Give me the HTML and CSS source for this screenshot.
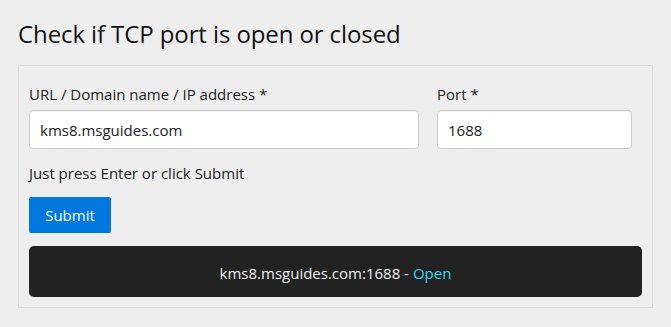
FILE: index.html
```html
<!DOCTYPE html>
<html>
<head>
  <title>TCP Port Checker</title>
  <link rel="stylesheet" href="styles.css">
</head>
<body>
  <div class="page">
    <h1 class="title">Check if TCP port is open or closed</h1>

    <form class="panel">
      <div class="fields">
        <div class="field">
          <label class="label" for="host">URL / Domain name / IP address *</label>
          <input class="input" id="host" type="text" value="kms8.msguides.com">
        </div>
        <div class="field">
          <label class="label" for="port">Port *</label>
          <input class="input" id="port" type="text" value="1688">
        </div>
      </div>

      <p class="hint">Just press Enter or click Submit</p>

      <div class="actions">
        <button class="btn" type="button">Submit</button>
      </div>

      <div class="result">
        kms8.msguides.com:1688 - <span class="result-open">Open</span>
      </div>
    </form>
  </div>
</body>
</html>
```

FILE: styles.css
```css
body {
  margin: 0;
  background: #eeeeee;
  font-family: "Open Sans", "Noto Sans", sans-serif;
  color: #222;
}

.page {
  padding: 0 18px;
}

.title {
  margin: 0;
  padding-top: 18px;
  height: 47px;
  font-size: 24px;
  font-weight: normal;
  line-height: 32px;
  color: #111;
  letter-spacing: -0.1px;
}

.panel {
  border: 1px solid #dddddd;
  padding: 18px 10px 10px;
  margin: 0;
}

.fields {
  display: grid;
  grid-template-columns: 390px 195px;
  column-gap: 18px;
}

.field {
  display: flex;
  flex-direction: column;
}

.label {
  font-size: 15px;
  line-height: 20px;
  margin-bottom: 6px;
  color: #222;
}

.input {
  box-sizing: border-box;
  height: 39px;
  padding: 0 10px;
  border: 1px solid #cccccc;
  border-radius: 4px;
  background: #fff;
  font-family: inherit;
  font-size: 15px;
  color: #222;
  box-shadow: inset 0 1px 1px rgba(0, 0, 0, 0.04);
}

.hint {
  margin: 14px 0 0;
  font-size: 15px;
  line-height: 20px;
}

.actions {
  margin-top: 14px;
}

.btn {
  width: 82px;
  height: 36px;
  border: none;
  border-radius: 2px;
  background: #0078de;
  color: #fff;
  font-family: inherit;
  font-size: 15px;
  padding: 0;
}

.result {
  margin-top: 13px;
  height: 51px;
  border-radius: 5px;
  background: #222222;
  color: #eeeeee;
  font-size: 15px;
  display: flex;
  align-items: center;
  justify-content: center;
  padding-top: 2px;
  box-sizing: border-box;
}

.result-open {
  color: #33d8f0;
  margin-left: 4px;
}
```
